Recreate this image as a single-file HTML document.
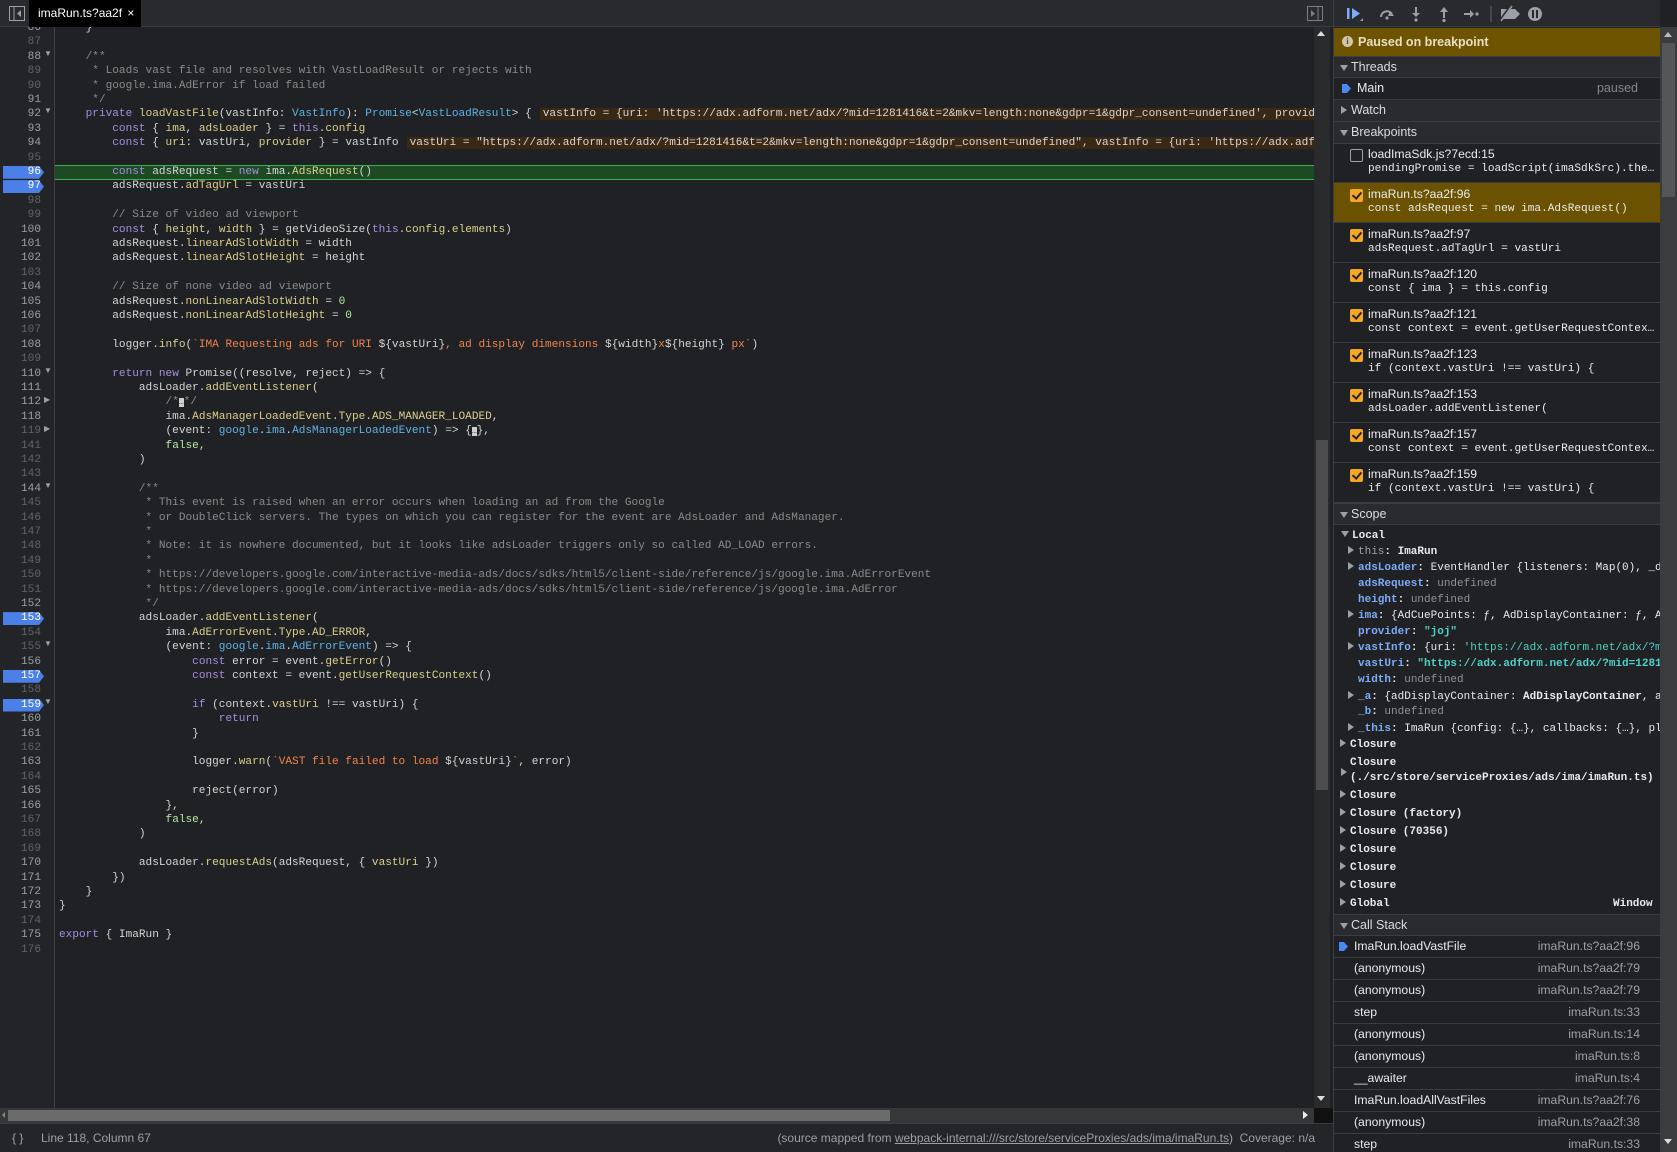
<!DOCTYPE html>
<html><head><meta charset="utf-8">
<style>
*{margin:0;padding:0;box-sizing:border-box}
body{width:1677px;height:1152px;background:#202124;overflow:hidden;position:relative;font-family:"Liberation Sans",sans-serif;color:#e8eaed}
.abs{position:absolute}
#top{left:0;top:0;width:1333px;height:27px;background:#292a2d;border-bottom:1px solid #3c3d40;z-index:2}
#tab{left:29px;top:0;width:112px;height:27px;background:#000;color:#fff;font-size:12px;line-height:27px;padding-left:9px;z-index:3;white-space:nowrap}
#gut{left:0;top:27px;width:55px;height:1081px;background:#232427;border-right:1px solid #3e3f42}
#code{left:55px;top:27px;width:1259px;height:1081px;overflow:hidden}
.ln{position:absolute;left:0;width:41px;text-align:right;font:11.1px/14.4px "Liberation Mono",monospace;color:#5f6368}
.ln.e{color:#9aa0a6}
.bp{position:absolute;left:3px;width:41px;height:13px;background:#4a80e8;color:#fff;font:11.1px/13px "Liberation Mono",monospace;text-align:right;padding-right:3px;clip-path:polygon(0 0,36px 0,41px 50%,36px 100%,0 100%)}
.fold{position:absolute;left:44px;font-size:8px;color:#9aa0a6;line-height:14.4px}
.cl{position:absolute;left:4px;white-space:pre;font:11.1px/14.4px "Liberation Mono",monospace;color:#d5d5d5}
.k{color:#a48ee0}.f{color:#d9d08c}.t{color:#5fb2e3}.c{color:#8a8a8a}.s{color:#f2844a}.b{color:#b5e7a5}.n{color:#b5e7a5}
.iv{background:#3b2814;color:#d6d6d6;padding:0 3px;margin-left:8px}
.dot{background:#cfcfcf;color:#333;font-size:8px}
#hl{left:55px;top:165px;width:1259px;height:15px;background:#1d4a22;border-top:1px solid #3bb054;border-bottom:1px solid #3bb054}
#vs{left:1314px;top:27px;width:16px;height:1081px;background:#2a2b2d}
#vth{left:1316px;top:440px;width:12px;height:350px;background:#4d4d4f}
#hs{left:0;top:1108px;width:1330px;height:15px;background:#363739}
#hth{left:8px;top:1110px;width:882px;height:11px;background:#6b6b6b}
#status{left:0;top:1123px;width:1333px;height:29px;background:#242528;border-top:1px solid #3c3d40;font-size:12px;color:#9aa0a6;line-height:28px}
#rp{left:1333px;top:0;width:327px;height:1152px;background:#202124;border-left:1px solid #3c3d40;overflow:hidden}
#rtool{left:0;top:0;width:344px;height:27px;background:#292a2d;border-bottom:1px solid #3c3d40}
.sh{position:absolute;left:0;width:327px;background:#2a2b2e;border-top:1px solid #3c3d40;border-bottom:1px solid #3c3d40;font-size:12.5px;color:#dadce0;padding-left:17px}
.sh:before{content:"";position:absolute;left:6px;top:8px;border-left:4px solid transparent;border-right:4px solid transparent;border-top:6px solid #9aa0a6}
.sh.cl2:before{top:6px;border-top:4px solid transparent;border-bottom:4px solid transparent;border-left:6px solid #9aa0a6;border-right:0;left:7px}
.bpi{position:absolute;left:0;width:327px;height:40px;border-bottom:1px solid #3c3d40}
.bpi .cb{position:absolute;left:16px;top:6px;width:13px;height:13px;border-radius:2px;background:#f5a623}
.bpi .cb:after{content:"";position:absolute;left:4px;top:1px;width:4px;height:7px;border-right:2px solid #2a2014;border-bottom:2px solid #2a2014;transform:rotate(40deg)}
.bpi .cb.off{background:transparent;border:1px solid #9aa0a6}
.bpi .cb.off:after{display:none}
.bpi .l1{position:absolute;left:34px;top:4px;font-size:12.2px;color:#e8eaed}
.bpi .l2{position:absolute;left:34px;top:20px;font:11.1px "Liberation Mono",monospace;color:#e8eaed;white-space:pre}
.sc{position:absolute;font:bold 11px/16px "Liberation Mono",monospace;color:#e8eaed;white-space:pre}
.sc .nm{color:#7cacf8}.sc .u{color:#8e9196;font-weight:normal}.sc .st{color:#4fd1c5}.sc .pl{font-weight:normal}
.tri{display:inline-block;width:0;height:0;border-top:4px solid transparent;border-bottom:4px solid transparent;border-left:6px solid #9aa0a6;margin-right:4px;vertical-align:0}
.trd{display:inline-block;width:0;height:0;border-left:4px solid transparent;border-right:4px solid transparent;border-top:6px solid #9aa0a6;margin-right:3px;vertical-align:1px}
.cs{position:absolute;left:0;width:327px;height:22px;border-bottom:1px solid #3c3d40;font-size:12.2px;line-height:21px;color:#e8eaed}
.cs .a{position:absolute;left:20px}.cs .r{position:absolute;right:21px;color:#9aa0a6}
</style></head><body>

<div id="gut" class="abs"></div>
<div id="hl" class="abs"></div>
<div id="code" class="abs"></div>
<div id="gutc" class="abs" style="left:0;top:0"></div>

<div id="top" class="abs"></div>
<svg class="abs" style="left:9px;top:6px;z-index:3" width="16" height="15"><rect x="0.5" y="0.5" width="15" height="14" fill="none" stroke="#9aa0a6"/><line x1="5" y1="1" x2="5" y2="14" stroke="#9aa0a6"/><path d="M12 4 L8 7.5 L12 11Z" fill="#9aa0a6"/></svg>
<div id="tab" class="abs">imaRun.ts?aa2f <span style="margin-left:2px">×</span></div>
<svg class="abs" style="left:1307px;top:6px;z-index:3" width="16" height="15"><rect x="0.5" y="0.5" width="15" height="14" fill="none" stroke="#7b7e82"/><line x1="11" y1="1" x2="11" y2="14" stroke="#7b7e82"/><path d="M4 4 L8 7.5 L4 11Z" fill="#7b7e82"/></svg>

<div id="vs" class="abs"></div>
<div id="vth" class="abs"></div>
<div class="abs" style="left:1317px;top:31px;border-left:4px solid transparent;border-right:4px solid transparent;border-bottom:5px solid #ddd"></div>
<div class="abs" style="left:1317px;top:1096px;border-left:4px solid transparent;border-right:4px solid transparent;border-top:5px solid #ddd"></div>
<div id="hs" class="abs"></div>
<div id="hth" class="abs"></div>
<div class="abs" style="left:2px;top:1112px;border-top:3px solid transparent;border-bottom:3px solid transparent;border-right:3px solid #888"></div>
<div class="abs" style="left:1303px;top:1111px;border-top:4px solid transparent;border-bottom:4px solid transparent;border-left:5px solid #eee"></div>
<div class="abs" style="left:1314px;top:1108px;width:19px;height:15px;background:#111"></div>
<div id="status" class="abs"><span style="position:absolute;left:12px;color:#9aa0a6">{ }</span><span style="position:absolute;left:41px">Line 118, Column 67</span><span style="position:absolute;right:18px">(source mapped from <u>webpack-internal:///src/store/serviceProxies/ads/ima/imaRun.ts</u>) &nbsp;Coverage: n/a</span></div>

<div id="rp" class="abs">
<div id="rtool" class="abs"></div>
<svg class="abs" style="left:10px;top:5px" width="230" height="18">
<rect x="3" y="3" width="2.5" height="11" fill="#7cacf8"/><path d="M8 3 L16 8.5 L8 14Z" fill="#7cacf8"/><path d="M16 16 L19 13 L19 16Z" fill="#9aa0a6"/>
<path d="M37 12 A6 6 0 0 1 48 9" fill="none" stroke="#9aa0a6" stroke-width="2"/><path d="M46 6 L50 11 L44 11Z" fill="#9aa0a6"/><circle cx="43" cy="13" r="1.6" fill="#9aa0a6"/>
<line x1="72" y1="2" x2="72" y2="10" stroke="#9aa0a6" stroke-width="2"/><path d="M68 8 L72 12 L76 8Z" fill="#9aa0a6"/><circle cx="72" cy="15" r="1.6" fill="#9aa0a6"/>
<line x1="100" y1="6" x2="100" y2="13" stroke="#9aa0a6" stroke-width="2"/><path d="M96 7 L100 2 L104 7Z" fill="#9aa0a6"/><circle cx="100" cy="15.5" r="1.6" fill="#9aa0a6"/>
<line x1="120" y1="9" x2="127" y2="9" stroke="#9aa0a6" stroke-width="2"/><path d="M126 5 L130 9 L126 13Z" fill="#9aa0a6"/><circle cx="133" cy="9" r="1.6" fill="#9aa0a6"/>
<line x1="147" y1="1" x2="147" y2="17" stroke="#5f6368"/>
<path d="M157 4 L171 4 L176 9 L171 14 L157 14Z" fill="#9aa0a6"/><line x1="156" y1="16" x2="167" y2="1" stroke="#292a2d" stroke-width="3"/><line x1="157" y1="16" x2="168" y2="1" stroke="#9aa0a6" stroke-width="1.5"/>
<circle cx="191" cy="9" r="7" fill="#9aa0a6"/><rect x="188" y="5" width="2" height="8" fill="#292a2d"/><rect x="192" y="5" width="2" height="8" fill="#292a2d"/>
</svg>
<div class="abs" style="left:0;top:28px;width:327px;height:28px;background:#6e5400;font-weight:bold;font-size:12.5px;line-height:28px;color:#e8dfc2;padding-left:24px">Paused on breakpoint</div>
<div class="abs" style="left:8px;top:36px;width:11px;height:11px;border-radius:50%;background:#cfc6ad;color:#6e5400;font:bold 9px/11px 'Liberation Serif',serif;text-align:center">i</div>

<div class="sh" style="top:56px;height:22px;line-height:20px">Threads</div>
<div class="abs" style="left:0;top:78px;width:327px;height:21px;font-size:12.5px;line-height:21px"><span style="position:absolute;left:8px;top:6px;width:9px;height:9px;background:#4a8af0;clip-path:polygon(0 0,55% 0,100% 50%,55% 100%,0 100%)"></span><span style="position:absolute;left:23px">Main</span><span style="position:absolute;right:23px;color:#80868b">paused</span></div>
<div class="sh cl2" style="top:99px;height:23px;line-height:21px">Watch</div>
<div class="sh" style="top:121px;height:23px;line-height:21px">Breakpoints</div>
<div id="bps"></div>
<div class="sh" style="top:503px;height:22px;line-height:20px">Scope</div>
<div id="scope"></div>
<div class="sh" style="top:914px;height:22px;line-height:20px">Call Stack</div>
<div id="cs"></div>
</div>
<div class="abs" style="left:1660px;top:27px;width:17px;height:1125px;background:#3b3c3e"></div>
<div class="abs" style="left:1662px;top:43px;width:13px;height:154px;background:#555658"></div>
<div class="abs" style="left:1664px;top:32px;border-left:4px solid transparent;border-right:4px solid transparent;border-bottom:5px solid #bbb"></div>
<div class="abs" style="left:1664px;top:1139px;border-left:4px solid transparent;border-right:4px solid transparent;border-top:5px solid #ddd"></div>

<script>
var L=[
[86,"    <span>}</span>",1],[87,"",0],[88,"    <span class=c>/**</span>",1,"f"],
[89,"<span class=c>     * Loads vast file and resolves with VastLoadResult or rejects with</span>",0],
[90,"<span class=c>     * google.ima.AdError if load failed</span>",0],
[91,"<span class=c>     */</span>",1],
[92,"    <span class=k>private</span> <span class=f>loadVastFile</span>(vastInfo: <span class=t>VastInfo</span>): <span class=t>Promise</span>&lt;<span class=t>VastLoadResult</span>&gt; {<span class=iv>vastInfo = {uri: 'https://adx.adform.net/adx/?mid=1281416&amp;t=2&amp;mkv=length:none&amp;gdpr=1&amp;gdpr_consent=undefined', provider: 'joj'}</span>",1,"f"],
[93,"        <span class=k>const</span> { <span class=f>ima</span>, <span class=f>adsLoader</span> } = <span class=k>this</span>.<span class=f>config</span>",1],
[94,"        <span class=k>const</span> { <span class=f>uri</span>: vastUri, <span class=f>provider</span> } = vastInfo<span class=iv>vastUri = \"https://adx.adform.net/adx/?mid=1281416&amp;t=2&amp;mkv=length:none&amp;gdpr=1&amp;gdpr_consent=undefined\", vastInfo = {uri: 'https://adx.adform.net/adx/'}</span>",1],
[95,"",0],
[96,"        <span class=k>const</span> adsRequest = <span class=k>new</span> ima.<span class=f>AdsRequest</span>()",1,"b"],
[97,"        adsRequest.<span class=f>adTagUrl</span> = vastUri",1,"b"],
[98,"",0],[99,"        <span class=c>// Size of video ad viewport</span>",0],
[100,"        <span class=k>const</span> { <span class=f>height</span>, <span class=f>width</span> } = getVideoSize(<span class=k>this</span>.<span class=f>config</span>.<span class=f>elements</span>)",1],
[101,"        adsRequest.<span class=f>linearAdSlotWidth</span> = width",1],
[102,"        adsRequest.<span class=f>linearAdSlotHeight</span> = height",1],
[103,"",0],[104,"        <span class=c>// Size of none video ad viewport</span>",1],
[105,"        adsRequest.<span class=f>nonLinearAdSlotWidth</span> = <span class=n>0</span>",1],
[106,"        adsRequest.<span class=f>nonLinearAdSlotHeight</span> = <span class=n>0</span>",1],
[107,"",0],
[108,"        logger.<span class=f>info</span>(<span class=s>`IMA Requesting ads for URI </span>${vastUri}<span class=s>, ad display dimensions </span>${width}<span class=s>x</span>${height}<span class=s> px`</span>)",1],
[109,"",0],
[110,"        <span class=k>return</span> <span class=k>new</span> Promise((resolve, reject) =&gt; {",1,"f"],
[111,"            adsLoader.<span class=f>addEventListener</span>(",1],
[112,"                <span class=c>/*</span><span class=dot>…</span><span class=c>*/</span>",1,"r"],
[118,"                ima.<span class=f>AdsManagerLoadedEvent</span>.<span class=f>Type</span>.<span class=f>ADS_MANAGER_LOADED</span>,",1],
[119,"                (event: <span class=t>google</span>.<span class=t>ima</span>.<span class=t>AdsManagerLoadedEvent</span>) =&gt; {<span class=dot>…</span>},",0,"r"],
[141,"                <span class=b>false</span>,",0],[142,"            )",0],[143,"",0],
[144,"            <span class=c>/**</span>",1,"f"],
[145,"<span class=c>             * This event is raised when an error occurs when loading an ad from the Google</span>",0],
[146,"<span class=c>             * or DoubleClick servers. The types on which you can register for the event are AdsLoader and AdsManager.</span>",0],
[147,"<span class=c>             *</span>",0],
[148,"<span class=c>             * Note: it is nowhere documented, but it looks like adsLoader triggers only so called AD_LOAD errors.</span>",0],
[149,"<span class=c>             *</span>",0],
[150,"<span class=c>             * https://developers.google.com/interactive-media-ads/docs/sdks/html5/client-side/reference/js/google.ima.AdErrorEvent</span>",0],
[151,"<span class=c>             * https://developers.google.com/interactive-media-ads/docs/sdks/html5/client-side/reference/js/google.ima.AdError</span>",0],
[152,"<span class=c>             */</span>",1],
[153,"            adsLoader.<span class=f>addEventListener</span>(",1,"b"],
[154,"                ima.<span class=f>AdErrorEvent</span>.<span class=f>Type</span>.<span class=f>AD_ERROR</span>,",0],
[155,"                (event: <span class=t>google</span>.<span class=t>ima</span>.<span class=t>AdErrorEvent</span>) =&gt; {",0,"f"],
[156,"                    <span class=k>const</span> error = event.<span class=f>getError</span>()",1],
[157,"                    <span class=k>const</span> context = event.<span class=f>getUserRequestContext</span>()",1,"b"],
[158,"",0],
[159,"                    <span class=k>if</span> (context.<span class=f>vastUri</span> !== vastUri) {",1,"bf"],
[160,"                        <span class=k>return</span>",1],[161,"                    }",1],[162,"",0],
[163,"                    logger.<span class=f>warn</span>(<span class=s>`VAST file failed to load </span>${vastUri}<span class=s>`</span>, error)",1],
[164,"",0],[165,"                    reject(error)",1],[166,"                },",1],
[167,"                <span class=b>false</span>,",0],[168,"            )",0],[169,"",0],
[170,"            adsLoader.<span class=f>requestAds</span>(adsRequest, { <span class=f>vastUri</span> })",1],
[171,"        })",1],[172,"    }",1],[173,"}",1],[174,"",0],
[175,"<span class=k>export</span> { ImaRun }",1],[176,"",0]];
var code="",gut="";
L.forEach(function(l,i){
 var y=21+i*14.4;
 code+='<div class="cl" style="top:'+(y-27)+'px">'+l[1]+'</div>';
 var fl=l[3]||"";
 if(fl.indexOf("b")>=0) gut+='<div class="bp" style="top:'+(y+0.7)+'px">'+l[0]+'</div>';
 else gut+='<div class="ln'+(l[2]?' e':'')+'" style="top:'+y+'px">'+l[0]+'</div>';
 if(fl.indexOf("f")>=0) gut+='<div class="fold" style="top:'+(y-3)+'px">▼</div>';
 if(fl.indexOf("r")>=0) gut+='<div class="fold" style="top:'+(y-2)+'px">▶</div>';
});
document.getElementById("code").innerHTML=code;
document.getElementById("gutc").innerHTML=gut;

var B=[[0,"loadImaSdk.js?7ecd:15","pendingPromise = loadScript(imaSdkSrc).the…"],
[1,"imaRun.ts?aa2f:96","const adsRequest = new ima.AdsRequest()"],
[1,"imaRun.ts?aa2f:97","adsRequest.adTagUrl = vastUri"],
[1,"imaRun.ts?aa2f:120","const { ima } = this.config"],
[1,"imaRun.ts?aa2f:121","const context = event.getUserRequestContex…"],
[1,"imaRun.ts?aa2f:123","if (context.vastUri !== vastUri) {"],
[1,"imaRun.ts?aa2f:153","adsLoader.addEventListener("],
[1,"imaRun.ts?aa2f:157","const context = event.getUserRequestContex…"],
[1,"imaRun.ts?aa2f:159","if (context.vastUri !== vastUri) {"]];
var h="";
B.forEach(function(b,i){
 h+='<div class="bpi" style="top:'+(143+i*40)+'px;'+(i==1?'background:#6b5200;':'')+'"><div class="cb'+(b[0]?'':' off')+'"></div><div class="l1">'+b[1]+'</div><div class="l2">'+b[2]+'</div></div>';
});
document.getElementById("bps").innerHTML=h;

var S=[
[528,7,'<span class=trd></span>Local'],
[544,14,'<span class=tri></span><span class=pl style="color:#9aa0a6">this</span>: ImaRun'],
[560,14,'<span class=tri></span><span class=nm>adsLoader</span>: <span class=pl>EventHandler {listeners: Map(0), _dispatch…</span>'],
[576,24,'<span class=nm>adsRequest</span>: <span class=u>undefined</span>'],
[592,24,'<span class=nm>height</span>: <span class=u>undefined</span>'],
[608,14,'<span class=tri></span><span class=nm>ima</span>: <span class=pl>{AdCuePoints: ƒ, AdDisplayContainer: ƒ, Ad…</span>'],
[624,24,'<span class=nm>provider</span>: <span class=st>"joj"</span>'],
[640,14,'<span class=tri></span><span class=nm>vastInfo</span>: <span class=pl>{uri: <span class=st>\'https://adx.adform.net/adx/?mi</span></span>'],
[656,24,'<span class=nm>vastUri</span>: <span class=st>"https://adx.adform.net/adx/?mid=12814</span>'],
[672,24,'<span class=nm>width</span>: <span class=u>undefined</span>'],
[689,14,'<span class=tri></span><span class=nm>_a</span>: <span class=pl>{adDisplayContainer: </span>AdDisplayContainer<span class=pl>, ad…</span>'],
[704,24,'<span class=nm>_b</span>: <span class=u>undefined</span>'],
[721,14,'<span class=tri></span><span class=nm>_this</span>: <span class=pl>ImaRun {config: {…}, callbacks: {…}, pla</span>'],
[737,6,'<span class=tri></span>Closure'],
[755,16,'Closure'],[770,16,'(./src/store/serviceProxies/ads/ima/imaRun.ts)'],
[788,6,'<span class=tri></span>Closure'],[806,6,'<span class=tri></span>Closure (factory)'],
[824,6,'<span class=tri></span>Closure (70356)'],[842,6,'<span class=tri></span>Closure'],
[860,6,'<span class=tri></span>Closure'],[878,6,'<span class=tri></span>Closure'],
[896,6,'<span class=tri></span>Global<span style="position:absolute;left:273px">Window</span>']];
h="";
S.forEach(function(s){h+='<div class="sc" style="top:'+s[0]+'px;left:'+s[1]+'px">'+s[2]+'</div>';});
h+='<div class="abs" style="left:7px;top:768px;border-top:4px solid transparent;border-bottom:4px solid transparent;border-left:6px solid #9aa0a6"></div>';
document.getElementById("scope").innerHTML=h;

var C=[["ImaRun.loadVastFile","imaRun.ts?aa2f:96"],["(anonymous)","imaRun.ts?aa2f:79"],["(anonymous)","imaRun.ts?aa2f:79"],["step","imaRun.ts:33"],["(anonymous)","imaRun.ts:14"],["(anonymous)","imaRun.ts:8"],["__awaiter","imaRun.ts:4"],["ImaRun.loadAllVastFiles","imaRun.ts?aa2f:76"],["(anonymous)","imaRun.ts?aa2f:38"],["step","imaRun.ts:33"]];
h="";
C.forEach(function(c,i){
 h+='<div class="cs" style="top:'+(936+i*22)+'px">'+(i==0?'<span style="position:absolute;left:5px;top:6px;width:9px;height:9px;background:#4a8af0;clip-path:polygon(0 0,55% 0,100% 50%,55% 100%,0 100%)"></span>':'')+'<span class=a>'+c[0]+'</span><span class=r>'+c[1]+'</span></div>';
});
document.getElementById("cs").innerHTML=h;
</script>
</body></html>
